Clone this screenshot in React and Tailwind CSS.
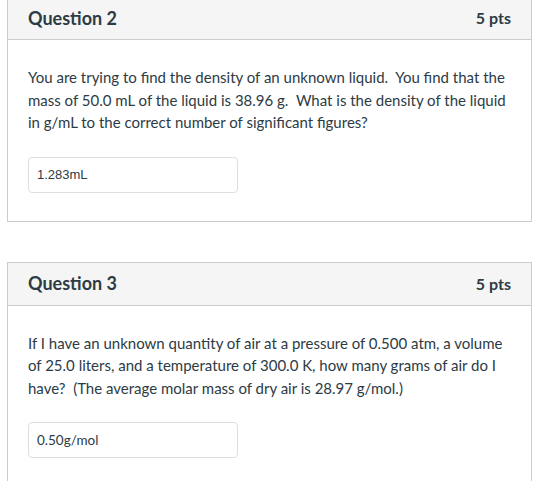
const questions = [
  {
    id: 2,
    points: 5,
    text: 'You are trying to find the density of an unknown liquid.\u00a0 You find that the mass of 50.0 mL of the liquid is 38.96 g.\u00a0 What is the density of the liquid in g/mL to the correct number of significant figures?',
    answer: '1.283mL',
    answerFont: 'font-["Liberation_Sans",Arial,sans-serif] text-[13px]',
  },
  {
    id: 3,
    points: 5,
    text: 'If I have an unknown quantity of air at a pressure of 0.500 atm, a volume of 25.0 liters, and a temperature of 300.0 K, how many grams of air do I have?\u00a0 (The average molar mass of dry air is 28.97 g/mol.)',
    answer: '0.50g/mol',
    answerFont: 'text-[13.5px]',
  },
];

function QuestionCard({ q }) {
  return (
    <div className="border border-[#c7cdd1] bg-white">
      <div className="flex h-[43px] items-center justify-between border-b border-[#c7cdd1] bg-[#f5f5f5] px-5">
        <h2 className="text-[18px] font-bold text-[#2d3b45]">Question {q.id}</h2>
        <span className="text-[16px] font-bold text-[#2d3b45]">{q.points} pts</span>
      </div>
      <div className="px-5 pt-[26px] pb-[28px]">
        <p className="text-[15px] leading-[22.5px] text-[#2d3b45]">{q.text}</p>
        <div className="mt-[23px] flex h-[36px] w-[210px] items-center rounded border border-[#dcdfe2] px-2">
          <span className={`${q.answerFont} text-[#2d3b45]`}>{q.answer}</span>
        </div>
      </div>
    </div>
  );
}

export default function App() {
  return (
    <div className="min-h-screen bg-white font-['Lato',sans-serif]">
      <div className="-mt-[4px] ml-[7px] w-[525px] space-y-[40px]">
        {questions.map((q) => (
          <QuestionCard key={q.id} q={q} />
        ))}
      </div>
    </div>
  );
}
